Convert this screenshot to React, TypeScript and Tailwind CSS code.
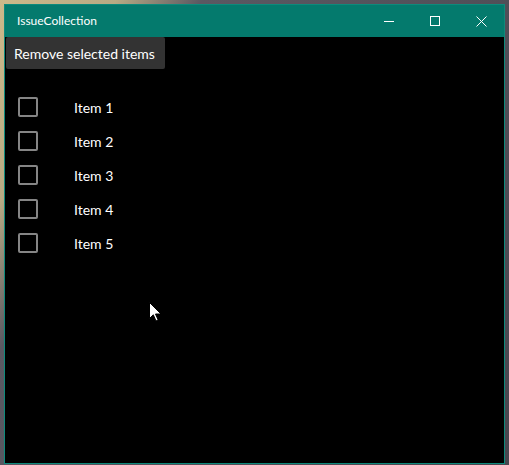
import { useState } from "react";

const items = ["Item 1", "Item 2", "Item 3", "Item 4", "Item 5"];

export default function App() {
  const [checked, setChecked] = useState<boolean[]>(items.map(() => false));

  return (
    <div
      className="relative h-[465px] w-[509px] overflow-hidden bg-[linear-gradient(120deg,#cdb98a_0%,#b8aa84_15%,#5a5862_26%,#48474f_100%)] pl-[4px] pt-[4px]"
      style={{ fontFamily: 'Lato, "Open Sans", sans-serif' }}
    >
      <div className="flex h-[460px] w-[501px] flex-col border border-[#0e8a7c] bg-black">
        <div className="flex h-[32px] shrink-0 items-center bg-[#047a6d] text-white">
          <span className="flex-1 pl-[12px] text-[12px]">IssueCollection</span>
          <div className="flex h-full">
            <button className="flex h-full w-[46px] items-center justify-center">
              <svg width="10" height="10" viewBox="0 0 10 10">
                <path d="M0 5.5h10" stroke="white" strokeWidth="1" />
              </svg>
            </button>
            <button className="flex h-full w-[46px] items-center justify-center">
              <svg width="10" height="10" viewBox="0 0 10 10">
                <rect x="0.5" y="0.5" width="9" height="9" fill="none" stroke="white" strokeWidth="1" />
              </svg>
            </button>
            <button className="flex h-full w-[46px] items-center justify-center">
              <svg width="11" height="11" viewBox="0 0 11 11">
                <path d="M0.5 0.5l10 10M10.5 0.5l-10 10" stroke="white" strokeWidth="1" />
              </svg>
            </button>
          </div>
        </div>

        <div className="flex flex-1 flex-col pl-[1px]">
          <button
            className="h-[32px] w-[159px] whitespace-nowrap rounded-[2px] bg-[#333333] px-[8px] text-left text-[14px] text-white"
            onClick={() => setChecked(items.map(() => false))}
          >
            Remove selected items
          </button>

          <div className="mt-[21px] flex flex-col">
            {items.map((item, i) => (
              <label key={item} className="flex h-[34px] items-center">
                <span
                  className={`ml-[12px] h-[20px] w-[20px] rounded-[2px] border-2 border-[#858585] ${checked[i] ? "bg-[#858585]" : ""}`}
                  onClick={() =>
                    setChecked((c) => c.map((v, j) => (j === i ? !v : v)))
                  }
                />
                <span className="ml-[36px] text-[14px] text-white">{item}</span>
              </label>
            ))}
          </div>
        </div>
      </div>

      <svg
        className="absolute left-[149px] top-[302px]"
        width="13"
        height="20"
        viewBox="0 0 13 20"
      >
        <path
          d="M0.5 0.5v16l3.8-3.7 2.7 6.2 2.2-1-2.7-6h5.5z"
          fill="white"
          stroke="black"
          strokeWidth="1"
        />
      </svg>
    </div>
  );
}
